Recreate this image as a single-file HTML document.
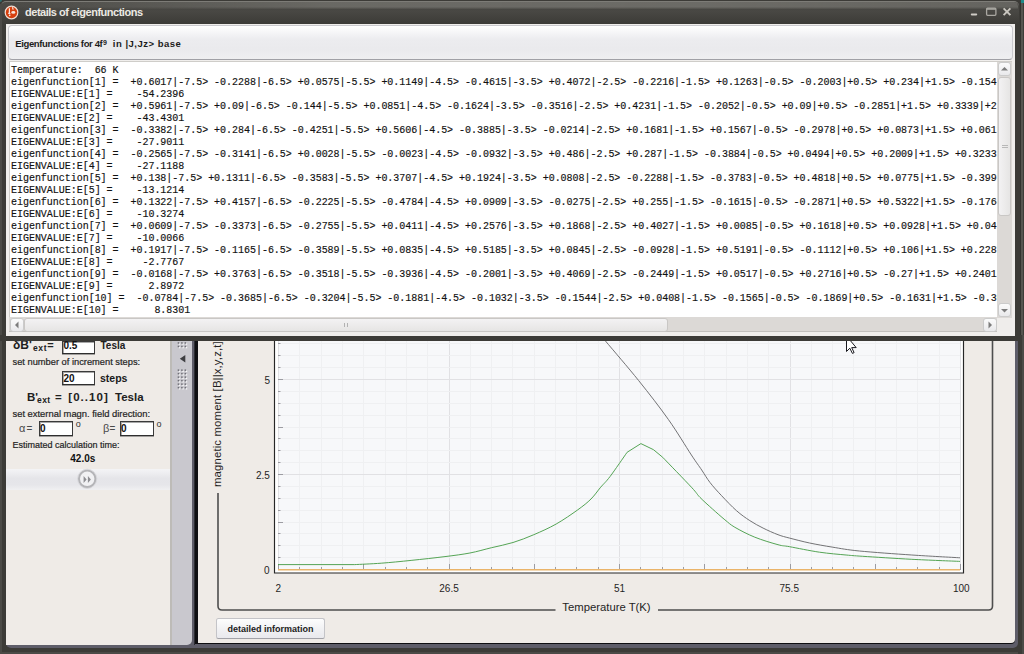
<!DOCTYPE html>
<html><head><meta charset="utf-8">
<style>
*{margin:0;padding:0;box-sizing:border-box}
html,body{width:1024px;height:654px;overflow:hidden;background:#3c3b37;font-family:"Liberation Sans",sans-serif}
.a{position:absolute}
.t{position:absolute;white-space:nowrap}
#txt{position:absolute;font-family:"Liberation Mono",monospace;font-size:10px;letter-spacing:-0.027px;line-height:12px;color:#111;white-space:pre;font-weight:normal;-webkit-text-stroke:0.15px #111}
.inp{position:absolute;background:#fff;border:1px solid #3a3a3a;border-bottom-color:#2e2e2e;box-shadow:inset 1px 1px 0 #a8a8a8,0 0.5px 0 #555}
</style></head><body>
<!-- background app -->
<div class="a" style="left:0;top:335px;width:2px;height:319px;background:#4b4a46"></div>
<div class="a" style="left:0;top:652px;width:1024px;height:2px;background:#4b4a46"></div>
<div class="a" style="left:6px;top:335px;width:1012px;height:313px;background:#5e5d69;border-radius:0 0 5px 5px"></div>
<div class="a" style="left:6px;top:335px;width:164px;height:310px;background:#efebe7"></div>
<div class="a" style="left:170px;top:335px;width:2px;height:310px;background:#bdbbb7"></div>
<div class="a" style="left:172px;top:335px;width:20px;height:310px;background:#c9c8ce;border-radius:0 0 5px 0"></div>
<div class="a" style="left:194px;top:335px;width:1px;height:310px;background:#2c2c33"></div>
<div class="a" style="left:195px;top:335px;width:820px;height:309px;background:#0f0f12;border-radius:0 0 4px 0"></div>
<div class="a" style="left:198px;top:335px;width:817px;height:308px;background:#efebe7;border-radius:0 0 4px 0"></div>
<div class="a" style="left:1018px;top:335px;width:4px;height:319px;background:#3c3b37"></div>
<div class="a" style="left:1022px;top:335px;width:2px;height:319px;background:#4b4a46"></div>
<!-- splitter grips -->
<svg class="a" style="left:172px;top:335px" width="20" height="60">
<rect x="6.90" y="8.40" width="1.4" height="1.4" fill="#f7f7f9"/><rect x="5.70" y="7.20" width="1.5" height="1.5" fill="#6f6f76"/>
<rect x="10.35" y="8.40" width="1.4" height="1.4" fill="#f7f7f9"/><rect x="9.15" y="7.20" width="1.5" height="1.5" fill="#6f6f76"/>
<rect x="13.80" y="8.40" width="1.4" height="1.4" fill="#f7f7f9"/><rect x="12.60" y="7.20" width="1.5" height="1.5" fill="#6f6f76"/>
<rect x="6.90" y="11.90" width="1.4" height="1.4" fill="#f7f7f9"/><rect x="5.70" y="10.70" width="1.5" height="1.5" fill="#6f6f76"/>
<rect x="10.35" y="11.90" width="1.4" height="1.4" fill="#f7f7f9"/><rect x="9.15" y="10.70" width="1.5" height="1.5" fill="#6f6f76"/>
<rect x="13.80" y="11.90" width="1.4" height="1.4" fill="#f7f7f9"/><rect x="12.60" y="10.70" width="1.5" height="1.5" fill="#6f6f76"/>
<rect x="6.90" y="35.60" width="1.4" height="1.4" fill="#f7f7f9"/><rect x="5.70" y="34.40" width="1.5" height="1.5" fill="#6f6f76"/>
<rect x="10.35" y="35.60" width="1.4" height="1.4" fill="#f7f7f9"/><rect x="9.15" y="34.40" width="1.5" height="1.5" fill="#6f6f76"/>
<rect x="13.80" y="35.60" width="1.4" height="1.4" fill="#f7f7f9"/><rect x="12.60" y="34.40" width="1.5" height="1.5" fill="#6f6f76"/>
<rect x="6.90" y="39.10" width="1.4" height="1.4" fill="#f7f7f9"/><rect x="5.70" y="37.90" width="1.5" height="1.5" fill="#6f6f76"/>
<rect x="10.35" y="39.10" width="1.4" height="1.4" fill="#f7f7f9"/><rect x="9.15" y="37.90" width="1.5" height="1.5" fill="#6f6f76"/>
<rect x="13.80" y="39.10" width="1.4" height="1.4" fill="#f7f7f9"/><rect x="12.60" y="37.90" width="1.5" height="1.5" fill="#6f6f76"/>
<rect x="6.90" y="42.60" width="1.4" height="1.4" fill="#f7f7f9"/><rect x="5.70" y="41.40" width="1.5" height="1.5" fill="#6f6f76"/>
<rect x="10.35" y="42.60" width="1.4" height="1.4" fill="#f7f7f9"/><rect x="9.15" y="41.40" width="1.5" height="1.5" fill="#6f6f76"/>
<rect x="13.80" y="42.60" width="1.4" height="1.4" fill="#f7f7f9"/><rect x="12.60" y="41.40" width="1.5" height="1.5" fill="#6f6f76"/>
<rect x="6.90" y="46.10" width="1.4" height="1.4" fill="#f7f7f9"/><rect x="5.70" y="44.90" width="1.5" height="1.5" fill="#6f6f76"/>
<rect x="10.35" y="46.10" width="1.4" height="1.4" fill="#f7f7f9"/><rect x="9.15" y="44.90" width="1.5" height="1.5" fill="#6f6f76"/>
<rect x="13.80" y="46.10" width="1.4" height="1.4" fill="#f7f7f9"/><rect x="12.60" y="44.90" width="1.5" height="1.5" fill="#6f6f76"/>
<rect x="6.90" y="49.60" width="1.4" height="1.4" fill="#f7f7f9"/><rect x="5.70" y="48.40" width="1.5" height="1.5" fill="#6f6f76"/>
<rect x="10.35" y="49.60" width="1.4" height="1.4" fill="#f7f7f9"/><rect x="9.15" y="48.40" width="1.5" height="1.5" fill="#6f6f76"/>
<rect x="13.80" y="49.60" width="1.4" height="1.4" fill="#f7f7f9"/><rect x="12.60" y="48.40" width="1.5" height="1.5" fill="#6f6f76"/>
<rect x="6.90" y="53.10" width="1.4" height="1.4" fill="#f7f7f9"/><rect x="5.70" y="51.90" width="1.5" height="1.5" fill="#6f6f76"/>
<rect x="10.35" y="53.10" width="1.4" height="1.4" fill="#f7f7f9"/><rect x="9.15" y="51.90" width="1.5" height="1.5" fill="#6f6f76"/>
<rect x="13.80" y="53.10" width="1.4" height="1.4" fill="#f7f7f9"/><rect x="12.60" y="51.90" width="1.5" height="1.5" fill="#6f6f76"/>
<path d="M13.3,20 L7.8,23.8 L13.3,27.6 Z" fill="#3e3e42"/>
</svg>
<!-- left panel controls -->
<div class="inp" style="left:62px;top:341px;width:33px;height:13px"></div>
<div class="inp" style="left:62px;top:371px;width:33px;height:14px"></div>
<div class="inp" style="left:38.5px;top:421px;width:34px;height:15px"></div>
<div class="inp" style="left:120px;top:421px;width:34px;height:15px"></div>
<div class="a" style="left:6px;top:469px;width:164px;height:21px;background:linear-gradient(#f4f4f6,#e5e5e9 45%,#e6e6ea 75%,#f0f0f2)"></div>
<svg class="a" style="left:75px;top:467px" width="24" height="24">
<circle cx="12.2" cy="11.8" r="8.3" fill="#f1f1f3" stroke="#b4b4b7" stroke-width="2.2"/>
<circle cx="12.2" cy="11.8" r="9.6" fill="none" stroke="#d6d6d9" stroke-width="0.8"/>
<path d="M8.6,9 L11.6,12.5 L8.6,16 Z M12.9,9 L15.9,12.5 L12.9,16 Z" fill="#8e8e92"/>
</svg>
<!-- chart panel -->
<svg class="a" style="left:0;top:0" width="1024" height="654">
<path d="M218,493 V606 Q218,610 222,610 H555.5" fill="none" stroke="#4e4e4e" stroke-width="1.6"/>
<path d="M658,610 H988.5 Q992.5,610 992.5,606 V300" fill="none" stroke="#4e4e4e" stroke-width="1.6"/>
<rect x="275" y="300" width="688" height="273" fill="#ffffff"/>
<rect x="278" y="300" width="682" height="270" fill="#f7f8fa"/>
<line x1="278.5" y1="300" x2="278.5" y2="570" stroke="#e1e1e4" stroke-width="1"/>
<line x1="299.5" y1="300" x2="299.5" y2="570" stroke="#eff0f2" stroke-width="1"/>
<line x1="321.5" y1="300" x2="321.5" y2="570" stroke="#eff0f2" stroke-width="1"/>
<line x1="342.5" y1="300" x2="342.5" y2="570" stroke="#eff0f2" stroke-width="1"/>
<line x1="363.5" y1="300" x2="363.5" y2="570" stroke="#eff0f2" stroke-width="1"/>
<line x1="385.5" y1="300" x2="385.5" y2="570" stroke="#eff0f2" stroke-width="1"/>
<line x1="406.5" y1="300" x2="406.5" y2="570" stroke="#eff0f2" stroke-width="1"/>
<line x1="427.5" y1="300" x2="427.5" y2="570" stroke="#eff0f2" stroke-width="1"/>
<line x1="449.5" y1="300" x2="449.5" y2="570" stroke="#e1e1e4" stroke-width="1"/>
<line x1="470.5" y1="300" x2="470.5" y2="570" stroke="#eff0f2" stroke-width="1"/>
<line x1="491.5" y1="300" x2="491.5" y2="570" stroke="#eff0f2" stroke-width="1"/>
<line x1="512.5" y1="300" x2="512.5" y2="570" stroke="#eff0f2" stroke-width="1"/>
<line x1="534.5" y1="300" x2="534.5" y2="570" stroke="#eff0f2" stroke-width="1"/>
<line x1="555.5" y1="300" x2="555.5" y2="570" stroke="#eff0f2" stroke-width="1"/>
<line x1="576.5" y1="300" x2="576.5" y2="570" stroke="#eff0f2" stroke-width="1"/>
<line x1="598.5" y1="300" x2="598.5" y2="570" stroke="#eff0f2" stroke-width="1"/>
<line x1="619.5" y1="300" x2="619.5" y2="570" stroke="#e1e1e4" stroke-width="1"/>
<line x1="640.5" y1="300" x2="640.5" y2="570" stroke="#eff0f2" stroke-width="1"/>
<line x1="662.5" y1="300" x2="662.5" y2="570" stroke="#eff0f2" stroke-width="1"/>
<line x1="683.5" y1="300" x2="683.5" y2="570" stroke="#eff0f2" stroke-width="1"/>
<line x1="704.5" y1="300" x2="704.5" y2="570" stroke="#eff0f2" stroke-width="1"/>
<line x1="726.5" y1="300" x2="726.5" y2="570" stroke="#eff0f2" stroke-width="1"/>
<line x1="747.5" y1="300" x2="747.5" y2="570" stroke="#eff0f2" stroke-width="1"/>
<line x1="768.5" y1="300" x2="768.5" y2="570" stroke="#eff0f2" stroke-width="1"/>
<line x1="790.5" y1="300" x2="790.5" y2="570" stroke="#e1e1e4" stroke-width="1"/>
<line x1="811.5" y1="300" x2="811.5" y2="570" stroke="#eff0f2" stroke-width="1"/>
<line x1="832.5" y1="300" x2="832.5" y2="570" stroke="#eff0f2" stroke-width="1"/>
<line x1="853.5" y1="300" x2="853.5" y2="570" stroke="#eff0f2" stroke-width="1"/>
<line x1="875.5" y1="300" x2="875.5" y2="570" stroke="#eff0f2" stroke-width="1"/>
<line x1="896.5" y1="300" x2="896.5" y2="570" stroke="#eff0f2" stroke-width="1"/>
<line x1="917.5" y1="300" x2="917.5" y2="570" stroke="#eff0f2" stroke-width="1"/>
<line x1="939.5" y1="300" x2="939.5" y2="570" stroke="#eff0f2" stroke-width="1"/>
<line x1="960.5" y1="300" x2="960.5" y2="570" stroke="#e1e1e4" stroke-width="1"/>
<line x1="278" y1="557.5" x2="960" y2="557.5" stroke="#eff0f2" stroke-width="1"/>
<line x1="278" y1="545.5" x2="960" y2="545.5" stroke="#eff0f2" stroke-width="1"/>
<line x1="278" y1="533.5" x2="960" y2="533.5" stroke="#eff0f2" stroke-width="1"/>
<line x1="278" y1="522.5" x2="960" y2="522.5" stroke="#eff0f2" stroke-width="1"/>
<line x1="278" y1="510.5" x2="960" y2="510.5" stroke="#eff0f2" stroke-width="1"/>
<line x1="278" y1="498.5" x2="960" y2="498.5" stroke="#eff0f2" stroke-width="1"/>
<line x1="278" y1="486.5" x2="960" y2="486.5" stroke="#eff0f2" stroke-width="1"/>
<line x1="278" y1="474.5" x2="960" y2="474.5" stroke="#e1e1e4" stroke-width="1"/>
<line x1="278" y1="462.5" x2="960" y2="462.5" stroke="#eff0f2" stroke-width="1"/>
<line x1="278" y1="450.5" x2="960" y2="450.5" stroke="#eff0f2" stroke-width="1"/>
<line x1="278" y1="438.5" x2="960" y2="438.5" stroke="#eff0f2" stroke-width="1"/>
<line x1="278" y1="427.5" x2="960" y2="427.5" stroke="#eff0f2" stroke-width="1"/>
<line x1="278" y1="415.5" x2="960" y2="415.5" stroke="#eff0f2" stroke-width="1"/>
<line x1="278" y1="403.5" x2="960" y2="403.5" stroke="#eff0f2" stroke-width="1"/>
<line x1="278" y1="391.5" x2="960" y2="391.5" stroke="#eff0f2" stroke-width="1"/>
<line x1="278" y1="379.5" x2="960" y2="379.5" stroke="#e1e1e4" stroke-width="1"/>
<line x1="278" y1="367.5" x2="960" y2="367.5" stroke="#eff0f2" stroke-width="1"/>
<line x1="278" y1="355.5" x2="960" y2="355.5" stroke="#eff0f2" stroke-width="1"/>
<line x1="278" y1="343.5" x2="960" y2="343.5" stroke="#eff0f2" stroke-width="1"/>
<line x1="278" y1="332.5" x2="960" y2="332.5" stroke="#eff0f2" stroke-width="1"/>
<line x1="278" y1="320.5" x2="960" y2="320.5" stroke="#eff0f2" stroke-width="1"/>
<line x1="278" y1="308.5" x2="960" y2="308.5" stroke="#eff0f2" stroke-width="1"/>
<line x1="278.5" y1="564" x2="278.5" y2="570" stroke="#9c9ca2" stroke-width="1"/>
<line x1="299.5" y1="567" x2="299.5" y2="570" stroke="#9c9ca2" stroke-width="1"/>
<line x1="321.5" y1="567" x2="321.5" y2="570" stroke="#9c9ca2" stroke-width="1"/>
<line x1="342.5" y1="567" x2="342.5" y2="570" stroke="#9c9ca2" stroke-width="1"/>
<line x1="363.5" y1="564" x2="363.5" y2="570" stroke="#9c9ca2" stroke-width="1"/>
<line x1="385.5" y1="567" x2="385.5" y2="570" stroke="#9c9ca2" stroke-width="1"/>
<line x1="406.5" y1="567" x2="406.5" y2="570" stroke="#9c9ca2" stroke-width="1"/>
<line x1="427.5" y1="567" x2="427.5" y2="570" stroke="#9c9ca2" stroke-width="1"/>
<line x1="449.5" y1="564" x2="449.5" y2="570" stroke="#9c9ca2" stroke-width="1"/>
<line x1="470.5" y1="567" x2="470.5" y2="570" stroke="#9c9ca2" stroke-width="1"/>
<line x1="491.5" y1="567" x2="491.5" y2="570" stroke="#9c9ca2" stroke-width="1"/>
<line x1="512.5" y1="567" x2="512.5" y2="570" stroke="#9c9ca2" stroke-width="1"/>
<line x1="534.5" y1="564" x2="534.5" y2="570" stroke="#9c9ca2" stroke-width="1"/>
<line x1="555.5" y1="567" x2="555.5" y2="570" stroke="#9c9ca2" stroke-width="1"/>
<line x1="576.5" y1="567" x2="576.5" y2="570" stroke="#9c9ca2" stroke-width="1"/>
<line x1="598.5" y1="567" x2="598.5" y2="570" stroke="#9c9ca2" stroke-width="1"/>
<line x1="619.5" y1="564" x2="619.5" y2="570" stroke="#9c9ca2" stroke-width="1"/>
<line x1="640.5" y1="567" x2="640.5" y2="570" stroke="#9c9ca2" stroke-width="1"/>
<line x1="662.5" y1="567" x2="662.5" y2="570" stroke="#9c9ca2" stroke-width="1"/>
<line x1="683.5" y1="567" x2="683.5" y2="570" stroke="#9c9ca2" stroke-width="1"/>
<line x1="704.5" y1="564" x2="704.5" y2="570" stroke="#9c9ca2" stroke-width="1"/>
<line x1="726.5" y1="567" x2="726.5" y2="570" stroke="#9c9ca2" stroke-width="1"/>
<line x1="747.5" y1="567" x2="747.5" y2="570" stroke="#9c9ca2" stroke-width="1"/>
<line x1="768.5" y1="567" x2="768.5" y2="570" stroke="#9c9ca2" stroke-width="1"/>
<line x1="790.5" y1="564" x2="790.5" y2="570" stroke="#9c9ca2" stroke-width="1"/>
<line x1="811.5" y1="567" x2="811.5" y2="570" stroke="#9c9ca2" stroke-width="1"/>
<line x1="832.5" y1="567" x2="832.5" y2="570" stroke="#9c9ca2" stroke-width="1"/>
<line x1="853.5" y1="567" x2="853.5" y2="570" stroke="#9c9ca2" stroke-width="1"/>
<line x1="875.5" y1="564" x2="875.5" y2="570" stroke="#9c9ca2" stroke-width="1"/>
<line x1="896.5" y1="567" x2="896.5" y2="570" stroke="#9c9ca2" stroke-width="1"/>
<line x1="917.5" y1="567" x2="917.5" y2="570" stroke="#9c9ca2" stroke-width="1"/>
<line x1="939.5" y1="567" x2="939.5" y2="570" stroke="#9c9ca2" stroke-width="1"/>
<line x1="960.5" y1="564" x2="960.5" y2="570" stroke="#9c9ca2" stroke-width="1"/>
<line x1="278" y1="569.5" x2="283" y2="569.5" stroke="#9c9ca2" stroke-width="1"/>
<line x1="278" y1="557.5" x2="280.5" y2="557.5" stroke="#9c9ca2" stroke-width="1"/>
<line x1="278" y1="545.5" x2="280.5" y2="545.5" stroke="#9c9ca2" stroke-width="1"/>
<line x1="278" y1="533.5" x2="280.5" y2="533.5" stroke="#9c9ca2" stroke-width="1"/>
<line x1="278" y1="522.5" x2="283" y2="522.5" stroke="#9c9ca2" stroke-width="1"/>
<line x1="278" y1="510.5" x2="280.5" y2="510.5" stroke="#9c9ca2" stroke-width="1"/>
<line x1="278" y1="498.5" x2="280.5" y2="498.5" stroke="#9c9ca2" stroke-width="1"/>
<line x1="278" y1="486.5" x2="280.5" y2="486.5" stroke="#9c9ca2" stroke-width="1"/>
<line x1="278" y1="474.5" x2="283" y2="474.5" stroke="#9c9ca2" stroke-width="1"/>
<line x1="278" y1="462.5" x2="280.5" y2="462.5" stroke="#9c9ca2" stroke-width="1"/>
<line x1="278" y1="450.5" x2="280.5" y2="450.5" stroke="#9c9ca2" stroke-width="1"/>
<line x1="278" y1="438.5" x2="280.5" y2="438.5" stroke="#9c9ca2" stroke-width="1"/>
<line x1="278" y1="427.5" x2="283" y2="427.5" stroke="#9c9ca2" stroke-width="1"/>
<line x1="278" y1="415.5" x2="280.5" y2="415.5" stroke="#9c9ca2" stroke-width="1"/>
<line x1="278" y1="403.5" x2="280.5" y2="403.5" stroke="#9c9ca2" stroke-width="1"/>
<line x1="278" y1="391.5" x2="280.5" y2="391.5" stroke="#9c9ca2" stroke-width="1"/>
<line x1="278" y1="379.5" x2="283" y2="379.5" stroke="#9c9ca2" stroke-width="1"/>
<line x1="278" y1="367.5" x2="280.5" y2="367.5" stroke="#9c9ca2" stroke-width="1"/>
<line x1="278" y1="355.5" x2="280.5" y2="355.5" stroke="#9c9ca2" stroke-width="1"/>
<line x1="278" y1="343.5" x2="280.5" y2="343.5" stroke="#9c9ca2" stroke-width="1"/>
<line x1="278" y1="332.5" x2="283" y2="332.5" stroke="#9c9ca2" stroke-width="1"/>
<line x1="278" y1="320.5" x2="280.5" y2="320.5" stroke="#9c9ca2" stroke-width="1"/>
<line x1="278" y1="308.5" x2="280.5" y2="308.5" stroke="#9c9ca2" stroke-width="1"/>
<path d="M590.00,322.60 C592.55,325.63 597.20,331.15 605.30,340.80 C613.40,350.45 628.08,367.38 638.60,380.50 C649.12,393.62 659.60,407.08 668.40,419.50 C677.20,431.92 685.85,446.58 691.40,455.00 C696.95,463.42 698.60,465.42 701.70,470.00 C704.80,474.58 706.68,478.22 710.00,482.50 C713.32,486.78 717.18,491.00 721.60,495.70 C726.02,500.40 731.80,506.55 736.50,510.70 C741.20,514.85 745.37,517.70 749.80,520.60 C754.23,523.50 758.40,525.75 763.10,528.10 C767.80,530.45 773.58,533.03 778.00,534.70 C782.42,536.37 784.33,536.72 789.60,538.10 C794.87,539.48 802.40,541.48 809.60,543.00 C816.80,544.52 824.50,545.87 832.80,547.20 C841.10,548.53 846.23,549.70 859.40,551.00 C872.57,552.30 895.03,553.87 911.80,555.00 C928.57,556.13 951.97,557.33 960.00,557.80" fill="none" stroke="#6c6c6e" stroke-width="0.95"/>
<path d="M278,564.6 L354.7,564.6" fill="none" stroke="#4c9f4c" stroke-width="0.95"/>
<path d="M354.70,564.60 C359.12,564.37 371.80,563.90 381.20,563.20 C390.60,562.50 400.47,561.50 411.10,560.40 C421.73,559.30 435.20,557.83 445.00,556.60 C454.80,555.37 462.15,554.48 469.90,553.00 C477.65,551.52 484.32,549.45 491.50,547.70 C498.68,545.95 505.95,544.67 513.00,542.50 C520.05,540.33 526.60,537.78 533.80,534.70 C541.00,531.62 548.87,528.15 556.20,524.00 C563.53,519.85 572.00,513.97 577.80,509.80 C583.60,505.63 587.18,502.77 591.00,499.00 C594.82,495.23 597.53,490.93 600.70,487.20 C603.87,483.47 605.60,482.42 610.00,476.60 C614.40,470.78 624.25,456.35 627.10,452.30" fill="none" stroke="#4c9f4c" stroke-width="0.95"/>
<path d="M627.1,452.3 L640.9,443.6 L653.5,449.7 L662.7,457.3" fill="none" stroke="#4c9f4c" stroke-width="0.95"/>
<path d="M662.70,457.30 C667.48,462.28 685.18,480.52 691.40,487.20 C697.62,493.88 696.48,493.77 700.00,497.40 C703.52,501.03 708.35,505.27 712.50,509.00 C716.65,512.73 721.17,516.75 724.90,519.80 C728.63,522.85 729.92,524.40 734.90,527.30 C739.88,530.20 747.62,534.30 754.80,537.20 C761.98,540.10 772.20,543.12 778.00,544.70 C783.80,546.28 782.68,545.45 789.60,546.70 C796.52,547.95 810.08,550.82 819.50,552.20 C828.92,553.58 838.90,554.32 846.10,555.00 C853.30,555.68 851.75,555.58 862.70,556.30 C873.65,557.02 895.58,558.45 911.80,559.30 C928.02,560.15 951.97,561.05 960.00,561.40" fill="none" stroke="#4c9f4c" stroke-width="0.95"/>
<line x1="278" y1="569.8" x2="960" y2="569.8" stroke="#eab46a" stroke-width="1.6"/>
<path d="M274.5,300 V573 H963.5 V300" fill="none" stroke="#262626" stroke-width="1.15"/>
</svg>
<div class="a" style="left:216px;top:617.5px;width:109px;height:21px;border:1px solid #c4c4c8;border-bottom-color:#a2a2a8;border-radius:2.5px;background:linear-gradient(#fdfdfd,#f2f2f4 50%,#e9e9ed)"></div>
<div class="t" style="left:13px;top:339px;font:bold 12px/12px 'Liberation Sans',sans-serif;color:#202020;">δB'</div>
<div class="t" style="left:33px;top:344px;font:bold 8.5px/8.5px 'Liberation Sans',sans-serif;color:#202020;letter-spacing:0.6px;">ext</div>
<div class="t" style="left:47.3px;top:340px;font:bold 11px/11px 'Liberation Sans',sans-serif;color:#202020;">=</div>
<div class="t" style="left:63.5px;top:341px;font:bold 10px/10px 'Liberation Sans',sans-serif;color:#111;">0.5</div>
<div class="t" style="left:100.5px;top:341px;font:bold 10px/10px 'Liberation Sans',sans-serif;color:#202020;">Tesla</div>
<div class="t" style="left:12.5px;top:358px;font:normal 9.3px/9.3px 'Liberation Sans',sans-serif;color:#1f1f1f;-webkit-text-stroke:0.2px #1f1f1f;">set number of increment steps:</div>
<div class="t" style="left:63.5px;top:374px;font:bold 10px/10px 'Liberation Sans',sans-serif;color:#111;">20</div>
<div class="t" style="left:100px;top:373px;font:bold 10.5px/10.5px 'Liberation Sans',sans-serif;color:#1a1a1a;">steps</div>
<div class="t" style="left:27px;top:391.5px;font:bold 11.5px/11.5px 'Liberation Sans',sans-serif;color:#202020;">B'</div>
<div class="t" style="left:37px;top:396px;font:bold 8.5px/8.5px 'Liberation Sans',sans-serif;color:#202020;letter-spacing:0.4px;">ext</div>
<div class="t" style="left:55px;top:391.5px;font:bold 11.5px/11.5px 'Liberation Sans',sans-serif;color:#202020;">=</div>
<div class="t" style="left:68.3px;top:391.5px;font:bold 11.5px/11.5px 'Liberation Sans',sans-serif;color:#202020;letter-spacing:1.05px;">[0..10]</div>
<div class="t" style="left:115px;top:391.5px;font:bold 11.5px/11.5px 'Liberation Sans',sans-serif;color:#202020;">Tesla</div>
<div class="t" style="left:12.5px;top:409px;font:normal 9.4px/9.4px 'Liberation Sans',sans-serif;color:#1f1f1f;-webkit-text-stroke:0.2px #1f1f1f;">set external magn. field direction:</div>
<div class="t" style="left:19px;top:423px;font:normal 11px/11px 'Liberation Sans',sans-serif;color:#4a4a4a;">α</div>
<div class="t" style="left:26.5px;top:424px;font:normal 10px/10px 'Liberation Sans',sans-serif;color:#4a4a4a;">=</div>
<div class="t" style="left:40px;top:424px;font:bold 10px/10px 'Liberation Sans',sans-serif;color:#111;">0</div>
<div class="t" style="left:75.8px;top:419.5px;font:normal 9px/9px 'Liberation Sans',sans-serif;color:#333;">o</div>
<div class="t" style="left:103px;top:423px;font:normal 11px/11px 'Liberation Sans',sans-serif;color:#4a4a4a;">β</div>
<div class="t" style="left:109.5px;top:424px;font:normal 10px/10px 'Liberation Sans',sans-serif;color:#4a4a4a;">=</div>
<div class="t" style="left:121px;top:424px;font:bold 10px/10px 'Liberation Sans',sans-serif;color:#111;">0</div>
<div class="t" style="left:156.5px;top:419.5px;font:normal 9px/9px 'Liberation Sans',sans-serif;color:#333;">o</div>
<div class="t" style="left:12.5px;top:441px;font:normal 9px/9px 'Liberation Sans',sans-serif;color:#1f1f1f;-webkit-text-stroke:0.2px #1f1f1f;">Estimated calculation time:</div>
<div class="t" style="left:70.3px;top:454px;font:bold 10px/10px 'Liberation Sans',sans-serif;color:#111;">42.0s</div>
<div class="t" style="left:264.5px;top:376px;font:normal 10px/10px 'Liberation Sans',sans-serif;color:#1f1f1f;">5</div>
<div class="t" style="left:256px;top:471px;font:normal 10px/10px 'Liberation Sans',sans-serif;color:#1f1f1f;">2.5</div>
<div class="t" style="left:264px;top:566px;font:normal 10px/10px 'Liberation Sans',sans-serif;color:#1f1f1f;">0</div>
<div class="t" style="left:275.5px;top:584px;font:normal 10px/10px 'Liberation Sans',sans-serif;color:#1f1f1f;">2</div>
<div class="t" style="left:439.3px;top:584px;font:normal 10px/10px 'Liberation Sans',sans-serif;color:#1f1f1f;">26.5</div>
<div class="t" style="left:614px;top:584px;font:normal 10px/10px 'Liberation Sans',sans-serif;color:#1f1f1f;">51</div>
<div class="t" style="left:779.5px;top:584px;font:normal 10px/10px 'Liberation Sans',sans-serif;color:#1f1f1f;">75.5</div>
<div class="t" style="left:953px;top:584px;font:normal 10px/10px 'Liberation Sans',sans-serif;color:#1f1f1f;">100</div>
<div class="t" style="left:562.3px;top:602px;font:normal 11.3px/11.3px 'Liberation Sans',sans-serif;color:#1f1f1f;">Temperature T(K)</div>
<div class="t" style="left:222px;top:486.5px;font:11.4px/11.4px 'Liberation Sans',sans-serif;color:#1f1f1f;letter-spacing:0.12px;transform-origin:0 0;transform:rotate(-90deg) translate(0,-9.6px)">magnetic moment [B||x,y,z,t]</div>
<div class="t" style="left:227.5px;top:624.5px;font:bold 9px/9px 'Liberation Sans',sans-serif;color:#1c1c1c;">detailed information</div>

<svg class="a" style="left:840px;top:330px" width="24" height="30"><path d="M6.5,6 V21.5 L9.8,18.2 L12.4,23.4 L14.1,22.6 L11.7,17.6 L16.2,17.6 Z" fill="#fff" stroke="#1a1a20" stroke-width="1" stroke-linejoin="miter"/></svg>
<!-- dialog -->
<div class="a" style="left:0;top:0;width:1020px;height:341px;background:#3c3b37;border-radius:5px 5px 0 0"></div>
<div class="a" style="left:1px;top:1px;width:1018px;height:23px;border-top:1px solid #7d7c77;border-radius:5px 5px 0 0;background:linear-gradient(#4a4945 0px,#474642 7px,#494844 9px,#3c3b37 22px)"></div>
<div class="a" style="left:2px;top:2px;width:1016px;height:7px;border-radius:4px 4px 0 0;background:linear-gradient(90deg,rgba(120,119,114,0.05) 0px,rgba(120,119,114,0.3) 120px,rgba(120,119,114,0.7) 330px,rgba(120,119,114,0.75) 700px,rgba(120,119,114,0.6) 1016px);-webkit-mask-image:linear-gradient(#000 70%,rgba(0,0,0,0.2))"></div>
<svg class="a" style="left:0;top:0" width="24" height="24">
<circle cx="11.5" cy="12.5" r="6.3" fill="#d6400f" stroke="#f4ddd2" stroke-width="1.2"/>
<path d="M9.4,8.3 V13.8 M8.2,13.3 L10.4,13.6 M12.4,7.2 L13.2,9.6" stroke="#f7e6de" stroke-width="1.2" fill="none"/>
<ellipse cx="13.3" cy="12.4" rx="2" ry="1.3" fill="#f7e4da"/>
<circle cx="9.7" cy="15.4" r="0.8" fill="#f7e4da"/>
</svg>
<svg class="a" style="left:965px;top:4px" width="52" height="16">
<rect x="5.8" y="9.4" width="6.4" height="2" rx="0.8" fill="#cfccc6"/>
<rect x="21.6" y="4.2" width="9.3" height="7.1" rx="1" fill="none" stroke="#aaa8a2" stroke-width="1.3"/>
<rect x="21.6" y="4.2" width="9.3" height="1.6" fill="#aaa8a2"/>
<path d="M38.6,4.3 L45.4,11.1 M45.4,4.3 L38.6,11.1" stroke="#cac7c0" stroke-width="1.9"/>
</svg>
<div class="a" style="left:6px;top:24px;width:1009px;height:312px;background:#f0eeec"></div>
<div class="a" style="left:8px;top:25px;width:1005px;height:35px;border:1px solid #cacace;border-bottom-color:#a0a0a6;border-radius:4px;background:linear-gradient(#ffffff,#ececef 40%,#eaeaed 70%,#efeff1)"></div>
<div class="a" style="left:9px;top:61px;width:1003px;height:271px;background:#fff;border:1px solid #cfcdc9;border-bottom:none"></div>
<div class="a" style="left:10px;top:62px;width:987px;height:256px;overflow:hidden"><div id="txt" style="left:1px;top:2.5px">Temperature:  66 K
eigenfunction[1] =  +0.6017|-7.5&gt; -0.2288|-6.5&gt; +0.0575|-5.5&gt; +0.1149|-4.5&gt; -0.4615|-3.5&gt; +0.4072|-2.5&gt; -0.2216|-1.5&gt; +0.1263|-0.5&gt; -0.2003|+0.5&gt; +0.234|+1.5&gt; -0.1542|+2.5&gt; +0.0811|+3.5&gt; -0.0347|+4.5&gt; +0.0123|+5.5&gt; -0.0041|+6.5&gt; +0.0012|+7.5&gt;
EIGENVALUE:E[1] =    -54.2396
eigenfunction[2] =  +0.5961|-7.5&gt; +0.09|-6.5&gt; -0.144|-5.5&gt; +0.0851|-4.5&gt; -0.1624|-3.5&gt; -0.3516|-2.5&gt; +0.4231|-1.5&gt; -0.2052|-0.5&gt; +0.09|+0.5&gt; -0.2851|+1.5&gt; +0.3339|+2.5&gt; -0.2113|+3.5&gt; +0.1021|+4.5&gt; -0.0412|+5.5&gt; +0.0131|+6.5&gt; -0.0033|+7.5&gt;
EIGENVALUE:E[2] =    -43.4301
eigenfunction[3] =  -0.3382|-7.5&gt; +0.284|-6.5&gt; -0.4251|-5.5&gt; +0.5606|-4.5&gt; -0.3885|-3.5&gt; -0.0214|-2.5&gt; +0.1681|-1.5&gt; +0.1567|-0.5&gt; -0.2978|+0.5&gt; +0.0873|+1.5&gt; +0.0611|+2.5&gt; -0.1102|+3.5&gt; +0.0634|+4.5&gt; -0.0251|+5.5&gt; +0.0082|+6.5&gt; -0.0021|+7.5&gt;
EIGENVALUE:E[3] =    -27.9011
eigenfunction[4] =  -0.2565|-7.5&gt; -0.3141|-6.5&gt; +0.0028|-5.5&gt; -0.0023|-4.5&gt; -0.0932|-3.5&gt; +0.486|-2.5&gt; +0.287|-1.5&gt; -0.3884|-0.5&gt; +0.0494|+0.5&gt; +0.2009|+1.5&gt; +0.3233|+2.5&gt; -0.2671|+3.5&gt; +0.1412|+4.5&gt; -0.0531|+5.5&gt; +0.0163|+6.5&gt; -0.0042|+7.5&gt;
EIGENVALUE:E[4] =    -27.1188
eigenfunction[5] =  +0.138|-7.5&gt; +0.1311|-6.5&gt; -0.3583|-5.5&gt; +0.3707|-4.5&gt; +0.1924|-3.5&gt; +0.0808|-2.5&gt; -0.2288|-1.5&gt; -0.3783|-0.5&gt; +0.4818|+0.5&gt; +0.0775|+1.5&gt; -0.3991|+2.5&gt; +0.2214|+3.5&gt; -0.0712|+4.5&gt; +0.0182|+5.5&gt; -0.0041|+6.5&gt; +0.0008|+7.5&gt;
EIGENVALUE:E[5] =    -13.1214
eigenfunction[6] =  +0.1322|-7.5&gt; +0.4157|-6.5&gt; -0.2225|-5.5&gt; -0.4784|-4.5&gt; +0.0909|-3.5&gt; -0.0275|-2.5&gt; +0.255|-1.5&gt; -0.1615|-0.5&gt; -0.2871|+0.5&gt; +0.5322|+1.5&gt; -0.1764|+2.5&gt; -0.1812|+3.5&gt; +0.1421|+4.5&gt; -0.0561|+5.5&gt; +0.0152|+6.5&gt; -0.0031|+7.5&gt;
EIGENVALUE:E[6] =    -10.3274
eigenfunction[7] =  +0.0609|-7.5&gt; -0.3373|-6.5&gt; -0.2755|-5.5&gt; +0.0411|-4.5&gt; +0.2576|-3.5&gt; +0.1868|-2.5&gt; +0.4027|-1.5&gt; +0.0085|-0.5&gt; +0.1618|+0.5&gt; +0.0928|+1.5&gt; +0.0412|+2.5&gt; +0.3121|+3.5&gt; -0.2514|+4.5&gt; +0.1023|+5.5&gt; -0.0271|+6.5&gt; +0.0052|+7.5&gt;
EIGENVALUE:E[7] =    -10.0066
eigenfunction[8] =  +0.1917|-7.5&gt; -0.1165|-6.5&gt; -0.3589|-5.5&gt; +0.0835|-4.5&gt; +0.5185|-3.5&gt; +0.0845|-2.5&gt; -0.0928|-1.5&gt; +0.5191|-0.5&gt; -0.1112|+0.5&gt; +0.106|+1.5&gt; +0.2281|+2.5&gt; -0.1941|+3.5&gt; +0.0812|+4.5&gt; -0.0214|+5.5&gt; +0.0041|+6.5&gt; -0.0006|+7.5&gt;
EIGENVALUE:E[8] =     -2.7767
eigenfunction[9] =  -0.0168|-7.5&gt; +0.3763|-6.5&gt; -0.3518|-5.5&gt; -0.3936|-4.5&gt; -0.2001|-3.5&gt; +0.4069|-2.5&gt; -0.2449|-1.5&gt; +0.0517|-0.5&gt; +0.2716|+0.5&gt; -0.27|+1.5&gt; +0.2401|+2.5&gt; -0.1052|+3.5&gt; +0.0311|+4.5&gt; -0.0062|+5.5&gt; +0.0009|+6.5&gt; -0.0001|+7.5&gt;
EIGENVALUE:E[9] =      2.8972
eigenfunction[10] =  -0.0784|-7.5&gt; -0.3685|-6.5&gt; -0.3204|-5.5&gt; -0.1881|-4.5&gt; -0.1032|-3.5&gt; -0.1544|-2.5&gt; +0.0408|-1.5&gt; -0.1565|-0.5&gt; -0.1869|+0.5&gt; -0.1631|+1.5&gt; -0.3012|+2.5&gt; +0.2341|+3.5&gt; -0.1134|+4.5&gt; +0.0362|+5.5&gt; -0.0081|+6.5&gt; +0.0013|+7.5&gt;
EIGENVALUE:E[10] =      8.8301</div></div>
<!-- v scroll -->
<div class="a" style="left:997px;top:62px;width:15px;height:256px;background:#dcd9d6"></div>
<div class="a" style="left:998px;top:62px;width:13px;height:14px;border:1px solid #cbcbcb;border-radius:3px;background:linear-gradient(#fbfbfb,#e9e9eb)"></div>
<svg class="a" style="left:998px;top:62px" width="13" height="14"><path d="M3,8.5 L6.5,5 L10,8.5Z" fill="#7c7c7c"/></svg>
<div class="a" style="left:998px;top:77px;width:13px;height:139px;border:1px solid #c9c7c5;border-radius:3px;background:linear-gradient(90deg,#f3f2f3,#e6e5e4)"></div>
<div class="a" style="left:1002px;top:145px;width:6px;height:1px;background:#b8b8b8"></div>
<div class="a" style="left:1002px;top:147px;width:6px;height:1px;background:#b8b8b8"></div>
<div class="a" style="left:998px;top:303px;width:13px;height:14px;border:1px solid #cbcbcb;border-radius:3px;background:linear-gradient(#fbfbfb,#e9e9eb)"></div>
<svg class="a" style="left:998px;top:303px" width="13" height="14"><path d="M3,6 L6.5,9.5 L10,6Z" fill="#7c7c7c"/></svg>
<!-- h scroll -->
<div class="a" style="left:9px;top:317px;width:988px;height:15px;background:#dcd9d6;border-bottom:1px solid #c2c0bd"></div>
<div class="a" style="left:10px;top:318px;width:14px;height:14px;border:1px solid #cbcbcb;border-radius:3px;background:linear-gradient(#fbfbfb,#e9e9eb)"></div>
<svg class="a" style="left:10px;top:318px" width="14" height="14"><path d="M8.5,3.5 L5,7 L8.5,10.5Z" fill="#7c7c7c"/></svg>
<div class="a" style="left:24px;top:318px;width:644px;height:14px;border:1px solid #c9c7c5;border-radius:3px;background:linear-gradient(#f3f2f3,#e6e5e4)"></div>
<div class="a" style="left:344px;top:323px;width:1px;height:4px;background:#b2b2b2"></div><div class="a" style="left:346.5px;top:323px;width:1px;height:4px;background:#b2b2b2"></div>
<div class="a" style="left:983px;top:318px;width:14px;height:14px;border:1px solid #cbcbcb;border-radius:3px;background:linear-gradient(#fbfbfb,#e9e9eb)"></div>
<svg class="a" style="left:983px;top:318px" width="14" height="14"><path d="M5.5,3.5 L9,7 L5.5,10.5Z" fill="#7c7c7c"/></svg>
<div class="a" style="left:997px;top:318px;width:15px;height:14px;background:#efedeb"></div>
<div class="t" style="left:25px;top:7px;font:bold 11px/11px 'Liberation Sans',sans-serif;color:#ebe8e2;letter-spacing:-0.48px;">details of eigenfunctions</div>
<div class="t" style="left:15.3px;top:39px;font:bold 9.5px/9.5px 'Liberation Sans',sans-serif;color:#1c1c1c;letter-spacing:-0.38px;">Eigenfunctions for 4f</div>
<div class="t" style="left:103px;top:38.5px;font:bold 7px/7px 'Liberation Sans',sans-serif;color:#1c1c1c;">9</div>
<div class="t" style="left:112.8px;top:39px;font:bold 9.5px/9.5px 'Liberation Sans',sans-serif;color:#1c1c1c;letter-spacing:0.5px;">in |J,Jz&gt; base</div>
<div class="a" style="left:0;top:4px;width:2px;height:331px;background:#4b4a46"></div>
<div class="a" style="left:0;top:0;width:2px;height:2px;background:#2d6f72;border-bottom-right-radius:2px"></div>
<div class="a" style="left:1021px;top:0;width:3px;height:3px;background:#1f8a8a"></div>
<div class="a" style="left:1020px;top:3px;width:1px;height:332px;background:#33322e"></div>
<div class="a" style="left:1021px;top:3px;width:1.5px;height:332px;background:#55544f"></div>
</body></html>
